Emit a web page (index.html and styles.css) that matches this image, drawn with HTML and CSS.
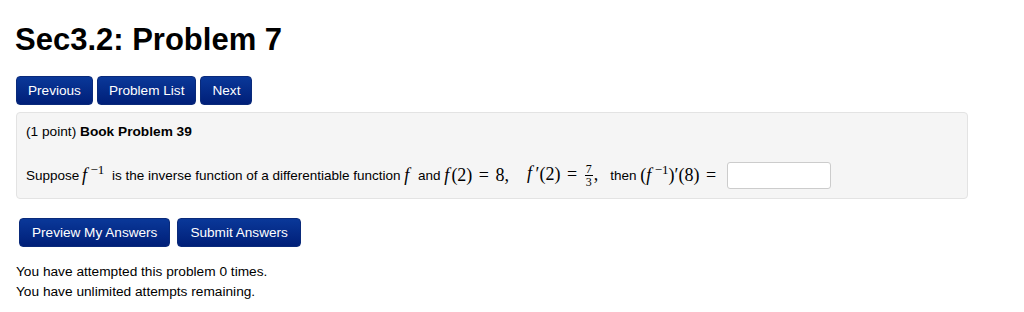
FILE: index.html
```html
<!DOCTYPE html>
<html>
<head>
<meta charset="utf-8">
<link rel="stylesheet" href="styles.css">
</head>
<body>
<div class="page">
  <h1 class="title">Sec3.2: Problem 7</h1>
  <div class="nav">
    <button class="btn">Previous</button>
    <button class="btn">Problem List</button>
    <button class="btn">Next</button>
  </div>
  <div class="problem">
    <div class="header">(1 point) <b>Book Problem 39</b></div>
    <div class="question">
      <span>Suppose&#8201;</span><span class="m"><i>f</i>&#8202;<sup class="sup">−1</sup></span><span>&nbsp;&nbsp;is the inverse function of a differentiable function&nbsp;</span><span class="m"><i>f</i></span><span>&ensp;and&nbsp;</span><span class="m ws"><i>f</i>(2) = 8,</span><span class="sp"></span><span class="m ws"><i>f</i>&#8202;′(2) = <span class="frac"><span class="num">7</span><span class="den">3</span></span>,</span><span class="sp2"></span><span>then&nbsp;</span><span class="m ws">(<i>f</i>&#8202;<sup class="sup">−1</sup>)′(8) =</span>
      <input class="answer" type="text">
    </div>
  </div>
  <div class="actions">
    <button class="btn btn-lg">Preview My Answers</button>
    <button class="btn btn-lg">Submit Answers</button>
  </div>
  <div class="info">
    <div>You have attempted this problem 0 times.</div>
    <div>You have unlimited attempts remaining.</div>
  </div>
</div>
</body>
</html>
```
FILE: styles.css
```css
html, body {
  margin: 0;
  padding: 0;
  background: #fff;
}
body {
  font-family: "Liberation Sans", Arial, sans-serif;
  color: #000;
}
.page {
  padding: 22px 56px 0 16px;
}
.title {
  margin: 0 0 0 -1px;
  font-size: 31px;
  line-height: 36px;
  font-weight: bold;
}
.nav {
  display: flex;
  gap: 4px;
  margin-top: 18px;
}
.btn {
  font-family: "Liberation Sans", Arial, sans-serif;
  font-size: 13.6px;
  color: #fff;
  background: linear-gradient(#0a3899, #001f78);
  border: 1px solid #0a2a7a;
  border-radius: 4px;
  height: 29px;
  padding: 0 11px;
  cursor: pointer;
}
.problem {
  margin-top: 7px;
  background: #f5f5f5;
  border: 1px solid #e3e3e3;
  border-radius: 4px;
  height: 85px;
  padding: 0 9px;
  font-size: 13.7px;
}
.header {
  margin-top: 11px;
  line-height: 16px;
}
.question {
  display: flex;
  align-items: center;
  margin-top: 20px;
  height: 30px;
  white-space: nowrap;
  font-size: 13.5px;
}
.m {
  font-family: "Liberation Serif", "Times New Roman", serif;
  font-size: 18px;
}
.ws { word-spacing: 2px; }
.m i { font-style: italic; margin-right: 2px; }
.sup {
  font-size: 13px;
  vertical-align: 7px;
  line-height: 0;
}
.sp { display: inline-block; width: 18px; }
.sp2 { display: inline-block; width: 12px; }
.frac {
  display: inline-flex;
  flex-direction: column;
  align-items: center;
  vertical-align: middle;
  font-size: 12px;
  line-height: 12px;
  margin: 0 1px;
}
.num { border-bottom: 1px solid #000; padding: 0 1px; }
.den { padding: 0 1px; }
.answer {
  margin-left: 11px;
  width: 104px;
  height: 27px;
  box-sizing: border-box;
  border: 1px solid #ccc;
  border-radius: 3px;
  background: #fff;
}
.actions {
  display: flex;
  gap: 7px;
  margin-top: 19px;
  padding-left: 3px;
}
.btn-lg {
  padding: 0 12px;
}
.info {
  margin-top: 15px;
  font-size: 13.7px;
  line-height: 20px;
}
```
